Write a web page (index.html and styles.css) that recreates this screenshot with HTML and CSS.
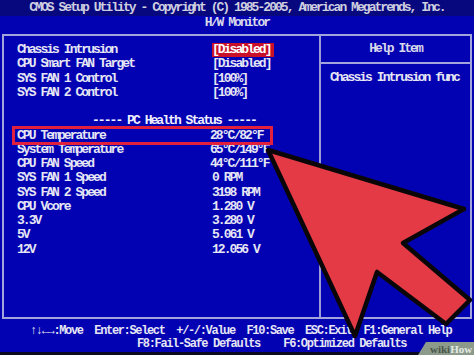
FILE: index.html
```html
<!DOCTYPE html>
<html>
<head>
<meta charset="utf-8">
<link rel="stylesheet" href="styles.css">
</head>
<body>
<div class="screen">
  <div class="title">CMOS Setup Utility - Copyright (C) 1985-2005, American Megatrends, Inc.</div>
  <div class="subtitle">H/W Monitor</div>
  <div class="panel">
    <div class="left">
      <div class="row"><span>Chassis Intrusion</span><span class="sel">[Disabled]</span></div>
      <div class="row"><span>CPU Smart FAN Target</span><span>[Disabled]</span></div>
      <div class="row"><span>SYS FAN 1 Control</span><span>[100%]</span></div>
      <div class="row"><span>SYS FAN 2 Control</span><span>[100%]</span></div>
      <div class="row"><span></span><span></span></div>
      <div class="heading">----- PC Health Status -----</div>
      <div class="row"><span>CPU Temperature</span><span class="tv">28°C/82°F</span></div>
      <div class="row"><span>System Temperature</span><span class="tv">65°C/149°F</span></div>
      <div class="row"><span>CPU FAN Speed</span><span class="tv">44°C/111°F</span></div>
      <div class="row"><span>SYS FAN 1 Speed</span><span>0 RPM</span></div>
      <div class="row"><span>SYS FAN 2 Speed</span><span>3198 RPM</span></div>
      <div class="row"><span>CPU Vcore</span><span>1.280 V</span></div>
      <div class="row"><span>3.3V</span><span>3.280 V</span></div>
      <div class="row"><span>5V</span><span>5.061 V</span></div>
      <div class="row"><span>12V</span><span>12.056 V</span></div>
    </div>
    <div class="right">
      <div class="help-head">Help Item</div>
      <div class="help-text">Chassis Intrusion func</div>
    </div>
  </div>
  <div class="keys">
    <div class="keys1">↑↓←→:Move  Enter:Select  +/-/:Value  F10:Save  ESC:Exit  F1:General Help</div>
    <div class="keys2">F8:Fail-Safe Defaults    F6:Optimized Defaults</div>
  </div>
  <div class="bottom-strip"></div>

  <div class="mark"></div>
  <svg class="arrow" viewBox="0 0 474 355" width="474" height="355">
    <path d="M268 150 L464 209 L403 243 L470 300 L446 324 L377 272 L355 336 Z"
          fill="#e43a46" stroke="#0a0608" stroke-width="4.5" stroke-linejoin="round"/>
  </svg>
  <div class="badge"><span class="wiki">wiki</span><span class="how">How</span></div>
</div>
</body>
</html>
```

FILE: styles.css
```css
html, body {
  margin: 0;
  padding: 0;
  background: #0000b0;
}

.screen {
  position: relative;
  width: 474px;
  height: 355px;
  overflow: hidden;
  background: #0202b2;
  font-family: "Liberation Mono", "DejaVu Sans Mono", monospace;
  font-weight: bold;
  font-size: 13px;
  letter-spacing: -1.95px;
  color: #e6e6f4;
  white-space: nowrap;
}

.title {
  height: 16px;
  line-height: 16px;
  text-align: center;
  background: #08087e;
  color: #cfcfe0;
}

.subtitle {
  height: 14px;
  line-height: 14px;
  text-align: center;
  color: #d8d8ea;
}

.panel {
  margin: 4px 2px 0 2px;
  height: 281px;
  border: 2px solid #a4a4dc;
  display: grid;
  grid-template-columns: 317px 1fr;
}

.left {
  padding: 7px 0 0 13px;
  border-right: 2px solid #9c9cd8;
}

.row {
  display: grid;
  grid-template-columns: 195px auto;
  height: 14.25px;
  line-height: 14.25px;
}

.row .tv {
  margin-left: -2px;
}

.sel {
  justify-self: start;
  background: #c8102a;
  color: #ffffff;
  padding-right: 3px;
}

.heading {
  height: 14.25px;
  line-height: 14.25px;
  padding-left: 75px;
  color: #f0f0ff;
}

.right {
  display: flex;
  flex-direction: column;
}

.help-head {
  height: 26px;
  line-height: 26px;
  text-align: center;
  border-bottom: 2px solid #a4a4dc;
  color: #d8d8ea;
}

.help-text {
  padding: 7px 0 0 9px;
  line-height: 14px;
}

.keys {
  padding-top: 6px;
  font-size: 12px;
  letter-spacing: -1.35px;
  line-height: 13px;
  padding-left: 30px;
  color: #e6e6f4;
}

.keys1,
.keys2 {
  white-space: pre;
}

.keys2 {
  padding-left: 107px;
}

.bottom-strip {
  position: absolute;
  left: 0;
  right: 0;
  bottom: 0;
  height: 3px;
  background: #0a0a20;
}

.mark {
  position: absolute;
  left: 12px;
  top: 126px;
  width: 255px;
  height: 13px;
  border: 3px solid #e0203c;
}

.arrow {
  position: absolute;
  left: 0;
  top: 0;
}

.badge {
  position: absolute;
  right: 0;
  bottom: 0;
  width: 56px;
  height: 13px;
  background: #8c9a8c;
  clip-path: polygon(8px 0, 100% 0, 100% 100%, 0 100%);
  font-family: "Liberation Serif", serif;
  font-size: 11px;
  letter-spacing: 0;
  line-height: 14px;
  padding-left: 12px;
  box-sizing: border-box;
}

.wiki {
  color: #4a564a;
}

.how {
  color: #e4eae4;
}
```
